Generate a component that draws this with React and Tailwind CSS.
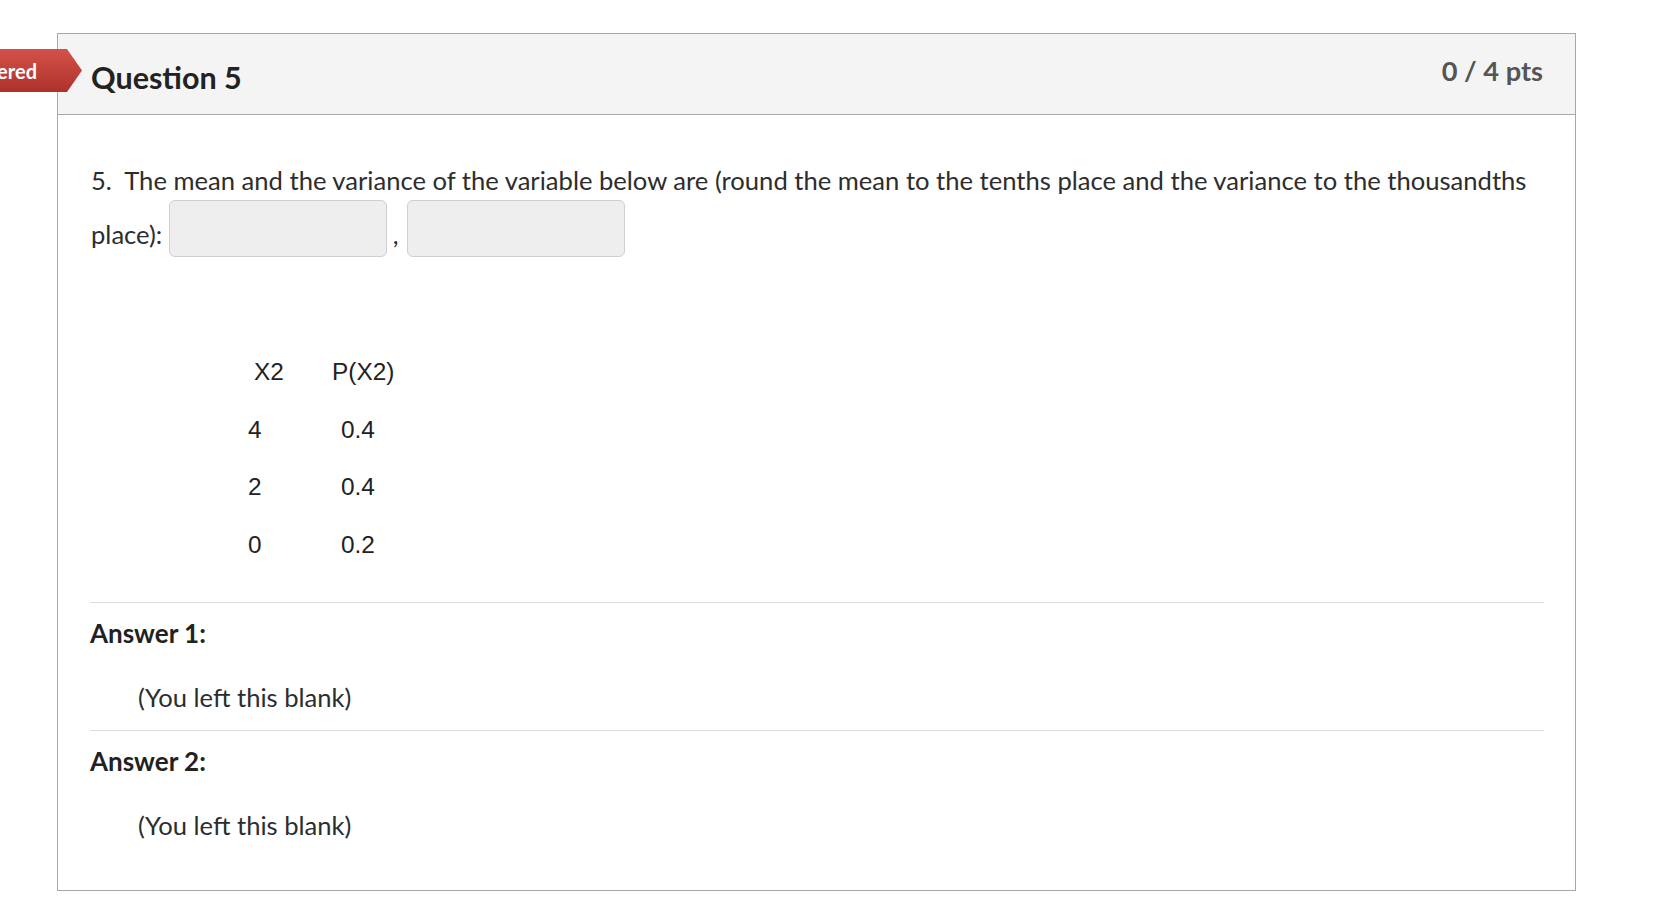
export default function App() {
  const rows = [
    ["4", "0.4"],
    ["2", "0.4"],
    ["0", "0.2"],
  ];

  return (
    <div className="min-h-screen bg-white pt-[33px] pl-[57px] overflow-hidden font-['Lato','Noto_Sans',sans-serif] text-[#2d2d2d]">
      <div className="relative w-[1519px] border border-[#a8a8a8] bg-white">
        {/* Unanswered flag */}
        <div className="absolute top-[15px] -left-[176px] w-[200px] h-[43px] flex items-center justify-end pr-[45px] bg-gradient-to-b from-[#d4514a] to-[#ad322b] [clip-path:polygon(0_0,calc(100%-15px)_0,100%_50%,calc(100%-15px)_100%,0_100%)]">
          <span className="text-white font-bold text-[20px] leading-[24px]">Unanswered</span>
        </div>

        {/* Header */}
        <div className="h-[81px] bg-[#f4f4f4] border-b border-[#a8a8a8] flex justify-between pl-[33px] pr-[32px]">
          <h2 className="pt-[25px] text-[30.5px] leading-[36px] font-bold text-[#222]">Question 5</h2>
          <div className="pt-[21px] text-[27.2px] leading-[32px] font-bold text-[#555]">0 / 4 pts</div>
        </div>

        {/* Body */}
        <div className="pt-[46px] pl-[32px] pr-[31px] pb-[45px]">
          <p className="pl-[1px] text-[25.6px] leading-[39px]">
            5.&nbsp; The mean and the variance of the variable below are (round the mean to the tenths place and the variance to the thousandths place):{" "}
            <span className="inline-block w-[218px] h-[57px] align-[-13px] bg-[#eeeeee] border border-[#cfcfcf] rounded-[6px]"></span>
            <span className="ml-[6px] mr-[8px]">,</span>
            <span className="inline-block w-[218px] h-[57px] align-[-13px] bg-[#eeeeee] border border-[#cfcfcf] rounded-[6px]"></span>
          </p>

          <table className="mt-[87px] ml-[158px] font-['Liberation_Sans',Arial,sans-serif] text-[24.4px] text-[#222]">
            <tbody>
              <tr className="h-[57.5px]">
                <td className="w-[84px] p-0 pl-[6px]">X2</td>
                <td className="p-0">P(X2)</td>
              </tr>
              {rows.map((r, i) => (
                <tr key={i} className="h-[57.5px]">
                  <td className="p-0">{r[0]}</td>
                  <td className="p-0 pl-[9px]">{r[1]}</td>
                </tr>
              ))}
            </tbody>
          </table>

          <div className="mt-[28px] border-t border-[#dddddd] pt-[11px]">
            <div className="text-[26px] leading-[39px] font-bold text-[#222]">Answer 1:</div>
            <div className="mt-[25px] pl-[48px] text-[25.6px] leading-[39px]">(You left this blank)</div>
          </div>
          <div className="mt-[13px] border-t border-[#dddddd] pt-[11px]">
            <div className="text-[26px] leading-[39px] font-bold text-[#222]">Answer 2:</div>
            <div className="mt-[25px] pl-[48px] text-[25.6px] leading-[39px]">(You left this blank)</div>
          </div>
        </div>
      </div>
    </div>
  );
}
